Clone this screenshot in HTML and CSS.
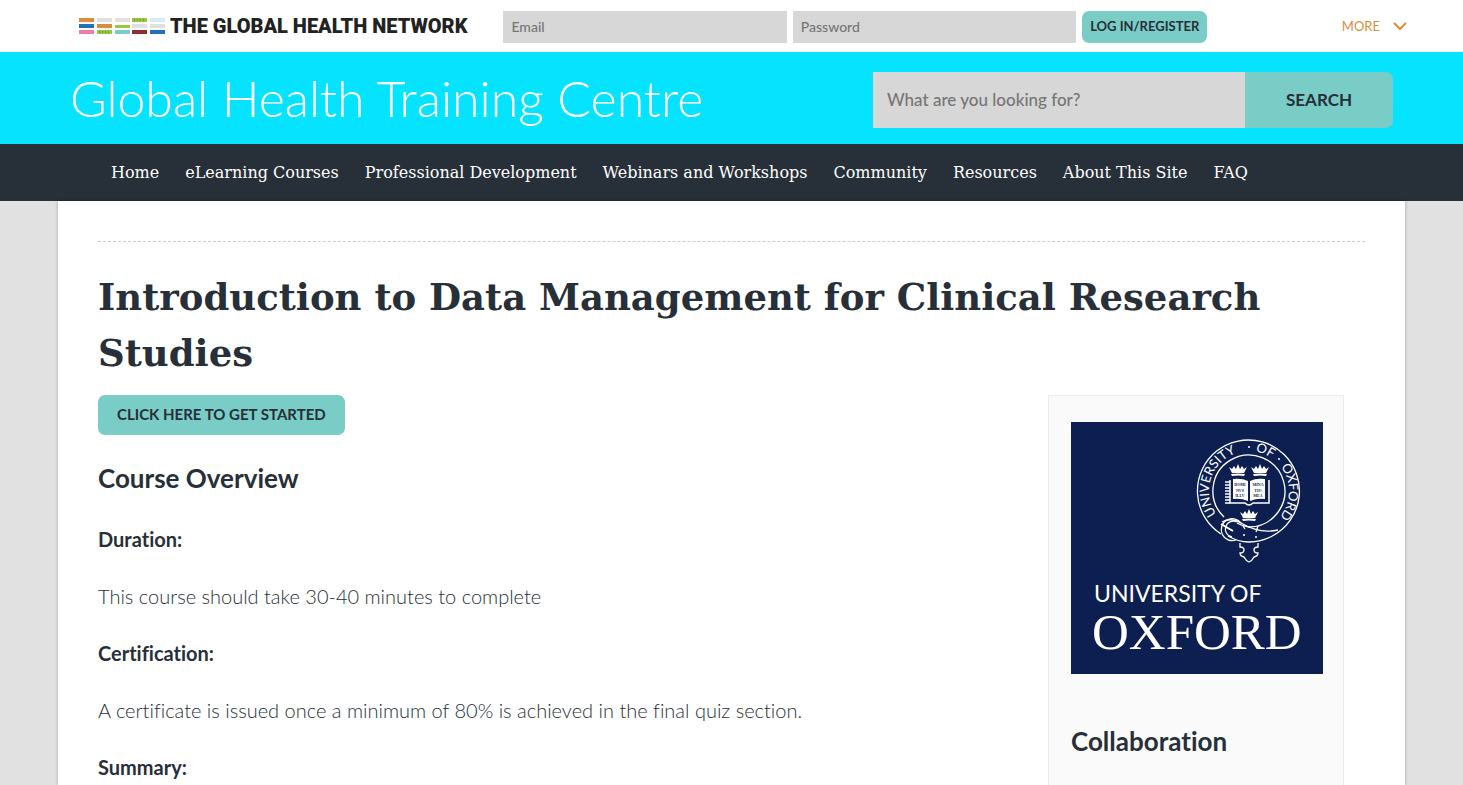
FILE: index.html
```html
<!DOCTYPE html>
<html lang="en">
	<head>
		<meta charset="utf-8">
		<meta name="viewport" content="width=device-width, initial-scale=1">
		<title>Introduction to Data Management for Clinical Research Studies</title>
		<link rel="stylesheet" href="styles.css">
	</head>
	<body>
		<div class="topbar">
			<a href="#" class="network">
				<svg class="network-mark" width="86" height="18" viewBox="0 0 86 18" aria-hidden="true">
					<path fill="#d98d3c" d="M0 1h15v4H0zM18 7h15v4H18z"/>
					<path fill="#2271b8" d="M0 7h15v4H0zM71 13h15v4H71z"/>
					<path fill="#ee7bae" d="M0 13h15v4H0z"/>
					<path fill="#e0e0e0" d="M18 1h15v4H18zM36 1h15v4H36zM53 7h15v4H53zM71 7h15v4H71z"/>
					<path fill="#97c83f" d="M53 1h15v4H53zM36 8h15v3H36zM18 13h15v4H18z"/>
					<path fill="#7accc8" d="M36 13h15v4H36z"/>
					<path fill="#8c2f36" d="M53 13h15v4H53z"/>
					<path fill="#d3ecf7" d="M71 1h15v4H71z"/>
					<path stroke="#466c4a" stroke-dasharray="1 2" d="M55 3h12M20 15h12"/>
					<path stroke="#f0a6a0" stroke-dasharray="1 2" d="M2 5h12M20 11h12M55 5h12"/>
				</svg>
				<span>THE GLOBAL HEALTH NETWORK</span>
			</a>
			<form class="login">
				<input type="email" placeholder="Email" aria-label="Email">
				<input type="password" placeholder="Password" aria-label="Password">
				<button type="button" class="btn">LOG IN/REGISTER</button>
			</form>
			<a href="#" class="more">MORE
				<svg width="14" height="9" viewBox="0 0 14 9" aria-hidden="true"><path d="M1 1l6 6 6-6" fill="none" stroke="#d98d3c" stroke-width="2"/></svg>
			</a>
		</div>
		<header class="banner">
			<a href="#" class="site-name">Global Health Training Centre</a>
			<form class="search">
				<input type="search" placeholder="What are you looking for?" aria-label="Search">
				<button type="button" class="btn">SEARCH</button>
			</form>
		</header>
		<nav class="menu">
			<a href="#">Home</a>
			<a href="#">eLearning Courses</a>
			<a href="#">Professional Development</a>
			<a href="#">Webinars and Workshops</a>
			<a href="#">Community</a>
			<a href="#">Resources</a>
			<a href="#">About This Site</a>
			<a href="#">FAQ</a>
		</nav>
		<main class="page">
			<h1>Introduction to Data Management for Clinical Research Studies</h1>
			<div class="columns">
				<article class="course">
					<button type="button" class="btn start">CLICK HERE TO GET STARTED</button>
					<h2>Course Overview</h2>
					<h3>Duration:</h3>
					<p>This course should take 30-40 minutes to complete</p>
					<h3>Certification:</h3>
					<p>A certificate is issued once a minimum of 80% is achieved in the final quiz section.</p>
					<h3>Summary:</h3>
				</article>
				<aside class="sidebar">
					<svg class="oxford" viewBox="0 0 252 252" role="img" aria-label="University of Oxford">
						<defs>
							<path id="ring" d="M178 109a40 40 0 0 1 0-80a40 40 0 0 1 0 80"/>
						</defs>
						<rect width="252" height="252" fill="#0d1f50"/>
						<g fill="none" stroke="#fff" stroke-width="1.3">
							<path d="M150 112A51 51 0 1 1 178 120Q167 120 157 114"/>
							<path d="M153 95A36 36 0 1 1 178 105Q171 104 166 101"/>
							<!-- belt and buckle -->
							<path d="M151 100Q160 95 170 101Q188 112 207 108"/>
							<path d="M170 101A11 11 0 1 0 165 118"/>
							<path d="M166 100A8 8 0 1 0 161 115"/>
							<path d="M150 102l12 7" stroke-width="2"/>
							<path d="M172 104l2 3M187 104l-2 6"/>
							<path d="M169 121v4q4 0 4 3t-4 3q0 3 4 4 2 4 5 5 3-1 5-5 4-1 4-4-4 0-4-3t4-3v-4"/>
						</g>
						<g fill="#fff">
							<circle cx="173" cy="113" r="1"/>
							<circle cx="185" cy="115" r="1"/>
							<circle cx="178" cy="25" r="1"/>
							<circle cx="208" cy="37" r="1"/>
							<g id="crown">
								<path d="M158 45l3 2 2-3 2 3 2-5 2 5 2-3 2 3 3-2-3 6h-12z"/>
								<path d="M160 52q7-1 14 0l-1 2q-6-1-12 0z"/>
							</g>
							<use href="#crown" x="22"/>
							<use href="#crown" x="11" y="45"/>
							<path d="M162 57q9-1 15 2v20q-7-3-15-2zM194 57q-9-1-15 2v20q7-3 15-2z"/>
						</g>
						<g fill="none" stroke="#fff">
							<path stroke-width="1.5" d="M159 58v23h15q4 4 8 0h16V58"/>
							<path stroke-width="1.5" d="M154 60h5M154 63h5M154 66h5M154 69h5M154 72h5M154 75h5M154 78h5M154 81h5"/>
						</g>
						<g class="book">
							<text x="169" y="64">DOMI</text>
							<text x="169" y="70">NVS</text>
							<text x="169" y="75">ILLV</text>
							<text x="187" y="64">MINA</text>
							<text x="187" y="70">TIO</text>
							<text x="187" y="75">MEA</text>
						</g>
						<g class="ring-text">
							<text><textPath href="#ring" startOffset="38">UNIVERSITY</textPath></text>
							<text><textPath href="#ring" startOffset="132">OF</textPath></text>
							<text><textPath href="#ring" startOffset="162">OXFORD</textPath></text>
						</g>
						<text class="oxford-small" x="23" y="180">UNIVERSITY OF</text>
						<text class="oxford-large" x="21" y="227">OXFORD</text>
					</svg>
					<h2>Collaboration</h2>
				</aside>
			</div>
		</main>
	</body>
</html>
```
FILE: styles.css
```css
*{box-sizing: border-box;}
body{margin: 0; background: #e1e1e1; color: #272f39; font-family: Lato, "Open Sans", sans-serif; font-size: 20px; font-variant-ligatures: none;}
a{color: inherit; text-decoration: none;}
h1,h2,h3,p{margin: 0;}
input,button{font-family: inherit; border: 0; margin: 0;}
input{background: #d7d7d7; color: #272f39; border-radius: 0; min-width: 0; appearance: none;}
input::placeholder{color: #757575; opacity: 1;}
.btn{background: #7accc6; color: #272f39; font-weight: 700; border-radius: 7px; cursor: pointer; white-space: nowrap;}

.topbar{display: flex; align-items: center; height: 52px; padding: 0 56px 0 79px; background: #fff;}
.network{display: flex; align-items: center; gap: 5px; color: #222; font-family: Roboto, sans-serif; font-size: 20px; font-weight: 900; white-space: nowrap;}
.network-mark{flex: none;}
.login{display: flex; gap: 6px; width: 53%; margin-left: 36px; height: 32px; margin-top: 2px;}
.login input{flex: 1; padding: 0 8px 2px; font-size: 14px; font-weight: 500;}
.login .btn{padding: 0 8px 2px; font-size: 13px;}
.more{display: flex; align-items: center; gap: 13px; margin-left: auto; color: #d98d3c; font-size: 13px;}

.banner{display: flex; align-items: center; justify-content: space-between; height: 92px; padding: 0 70px; background: #06e3ff;}
.site-name{color: #fff; font-size: 50px; font-weight: 300; line-height: 56px; white-space: nowrap;}
.search{display: flex; width: 520px; height: 56px; margin-top: 4px;}
.search input{flex: 1; padding: 0 14px 2px; font-size: 17px; font-weight: 500;}
.search .btn{width: 148px; padding-bottom: 2px; border-radius: 0 7px 7px 0; font-size: 17px;}

.menu{display: flex; align-items: center; gap: 26px; min-height: 57px; padding: 0 111px; background: #272f39; color: #fff; font-family: "DejaVu Serif", serif; font-size: 16px; white-space: nowrap;}

.page{margin: 0 58px; padding: 40px 40px 0; min-height: 584px; background: #fff; box-shadow: 0 0 3px rgba(0,0,0,.3);}
h1{padding-top: 27px; border-top: 1px dashed #ccc; font-family: "DejaVu Serif", serif; font-size: 37px; line-height: 56px;}
.columns{display: flex; justify-content: space-between; margin-top: 14px; padding-right: 21px;}
.course{flex: 1; padding-right: 40px;}
.start{height: 40px; padding: 0 19px 2px; font-size: 15px;}
h2{font-size: 26px; line-height: 36px;}
.course h2{margin-top: 25px;}
h3,p{margin-top: 29px; font-size: 20px; line-height: 28px;}
p{font-weight: 300;}
.sidebar{width: 296px; padding: 26px 20px 26px 22px; background: #fafafa; border: 1px solid #ebebeb; border-bottom: 0;}
.oxford{display: block; width: 100%;}
.sidebar h2{margin-top: 49px;}
.ring-text{fill: #fff; font-size: 13px;}
.book{fill: #0d1f50; font: 700 4px "Liberation Serif", serif; text-anchor: middle;}
.oxford-small{fill: #fff; font-size: 23px;}
.oxford-large{fill: #fff; font: 51px "Liberation Serif", serif;}
```
